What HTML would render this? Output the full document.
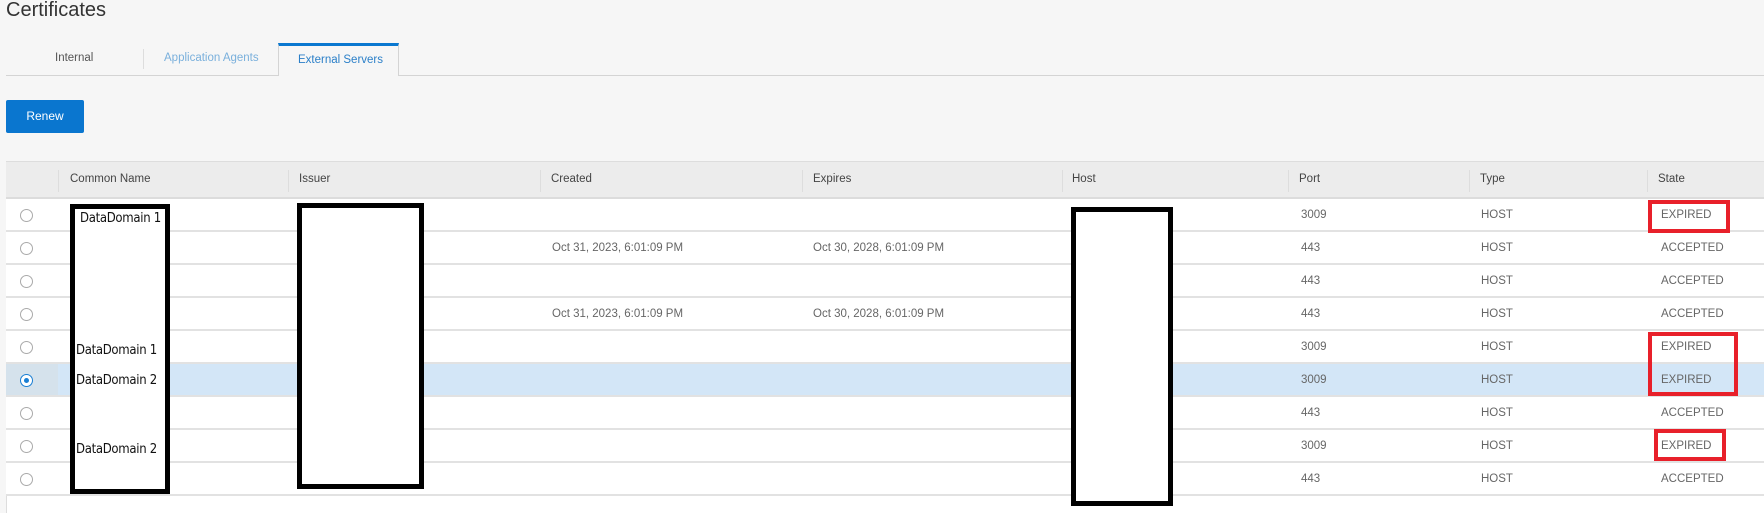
<!DOCTYPE html>
<html><head><style>
*{margin:0;padding:0;box-sizing:border-box}
body{width:1764px;height:513px;background:#f6f6f6;font-family:"Liberation Sans",sans-serif;position:relative;overflow:hidden}
.a{position:absolute}
.t{font-size:11.5px;color:#666;white-space:nowrap}
.h{font-size:11.5px;color:#444}
.row{position:absolute;left:6px;right:0;height:33px;background:#fff;border-bottom:2px solid #e2e2e2}
.rad{position:absolute;left:14px;top:10px;width:13px;height:13px;border:1px solid #aaa;border-radius:50%;background:#fff}
.bb{position:absolute;border:5px solid #000;background:#fff}
.rb{position:absolute;border:4px solid #e8202a}
.dd{position:absolute;font-family:"DejaVu Sans Condensed","Liberation Sans Narrow",sans-serif;font-size:13px;color:#111;letter-spacing:-0.3px}
.sep{position:absolute;top:8px;width:1px;height:22px;background:#ddd}
</style></head><body>
<div class="a" style="left:6px;top:-1px;font-size:20px;color:#333">Certificates</div>
<div class="a" style="left:6px;right:0;top:75px;height:1px;background:#d4d4d4"></div>
<div class="a t" style="left:55px;top:52px;color:#555">Internal</div>
<div class="a" style="left:143px;top:49px;width:1px;height:20px;background:#ddd"></div>
<div class="a t" style="left:164px;top:52px;color:#7ab0dc">Application Agents</div>
<div class="a" style="left:278px;top:43px;width:121px;height:33px;background:#f6f6f6;border:1px solid #d4d4d4;border-bottom:none;border-top:3px solid #0a78d0"></div>
<div class="a t" style="left:298px;top:54px;color:#2a7fc8">External Servers</div>
<div class="a" style="left:6px;top:100px;width:78px;height:33px;background:#0a76cf;border-radius:2px;color:#fff;font-size:12px;text-align:center;line-height:33px">Renew</div>
<div class="a" style="left:6px;right:0;top:161px;height:352px;background:#fff;border-left:1px solid #ddd"></div>
<div class="a" style="left:6px;right:0;top:161px;height:38px;background:#ececec;border-top:1px solid #ddd;border-bottom:2px solid #dcdcdc">
<div class="sep" style="left:52px"></div><div class="sep" style="left:282px"></div><div class="sep" style="left:534px"></div><div class="sep" style="left:796px"></div><div class="sep" style="left:1056px"></div><div class="sep" style="left:1282px"></div><div class="sep" style="left:1463px"></div><div class="sep" style="left:1641px"></div>
<span class="a h" style="left:64px;top:11px">Common Name</span>
<span class="a h" style="left:293px;top:11px">Issuer</span>
<span class="a h" style="left:545px;top:11px">Created</span>
<span class="a h" style="left:807px;top:11px">Expires</span>
<span class="a h" style="left:1066px;top:11px">Host</span>
<span class="a h" style="left:1293px;top:11px">Port</span>
<span class="a h" style="left:1474px;top:11px">Type</span>
<span class="a h" style="left:1652px;top:11px">State</span>
</div>

<div class="row" style="top:199px"><div class="rad"></div><span class="a t" style="left:1295px;top:10px">3009</span><span class="a t" style="left:1475px;top:10px">HOST</span><span class="a t" style="left:1655px;top:10px">EXPIRED</span></div>
<div class="row" style="top:232px"><div class="rad"></div><span class="a t" style="left:546px;top:10px">Oct 31, 2023, 6:01:09 PM</span><span class="a t" style="left:807px;top:10px">Oct 30, 2028, 6:01:09 PM</span><span class="a t" style="left:1295px;top:10px">443</span><span class="a t" style="left:1475px;top:10px">HOST</span><span class="a t" style="left:1655px;top:10px">ACCEPTED</span></div>
<div class="row" style="top:265px"><div class="rad"></div><span class="a t" style="left:1295px;top:10px">443</span><span class="a t" style="left:1475px;top:10px">HOST</span><span class="a t" style="left:1655px;top:10px">ACCEPTED</span></div>
<div class="row" style="top:298px"><div class="rad"></div><span class="a t" style="left:546px;top:10px">Oct 31, 2023, 6:01:09 PM</span><span class="a t" style="left:807px;top:10px">Oct 30, 2028, 6:01:09 PM</span><span class="a t" style="left:1295px;top:10px">443</span><span class="a t" style="left:1475px;top:10px">HOST</span><span class="a t" style="left:1655px;top:10px">ACCEPTED</span></div>
<div class="row" style="top:331px"><div class="rad"></div><span class="a t" style="left:1295px;top:10px">3009</span><span class="a t" style="left:1475px;top:10px">HOST</span><span class="a t" style="left:1655px;top:10px">EXPIRED</span></div>
<div class="row" style="top:364px;background:#d3e6f7"><div class="a" style="left:0;top:0;width:52px;height:31px;background:#d5e2ec"></div><div class="rad" style="border-color:#1a7fd4"><div class="a" style="left:3px;top:3px;width:5px;height:5px;border-radius:50%;background:#1a7fd4"></div></div><span class="a t" style="left:1295px;top:10px">3009</span><span class="a t" style="left:1475px;top:10px">HOST</span><span class="a t" style="left:1655px;top:10px">EXPIRED</span></div>
<div class="row" style="top:397px"><div class="rad"></div><span class="a t" style="left:1295px;top:10px">443</span><span class="a t" style="left:1475px;top:10px">HOST</span><span class="a t" style="left:1655px;top:10px">ACCEPTED</span></div>
<div class="row" style="top:430px"><div class="rad"></div><span class="a t" style="left:1295px;top:10px">3009</span><span class="a t" style="left:1475px;top:10px">HOST</span><span class="a t" style="left:1655px;top:10px">EXPIRED</span></div>
<div class="row" style="top:463px"><div class="rad"></div><span class="a t" style="left:1295px;top:10px">443</span><span class="a t" style="left:1475px;top:10px">HOST</span><span class="a t" style="left:1655px;top:10px">ACCEPTED</span></div>

<div class="bb" style="left:70px;top:204px;width:100px;height:290px"></div>
<div class="bb" style="left:297px;top:203px;width:127px;height:286px"></div>
<div class="bb" style="left:1071px;top:207px;width:102px;height:299px"></div>
<div class="dd" style="left:80px;top:211px">DataDomain 1</div>
<div class="dd" style="left:76px;top:343px">DataDomain 1</div>
<div class="dd" style="left:76px;top:373px">DataDomain 2</div>
<div class="dd" style="left:76px;top:442px">DataDomain 2</div>

<div class="rb" style="left:1648px;top:200px;width:82px;height:33px"></div>
<div class="rb" style="left:1648px;top:332px;width:90px;height:64px"></div>
<div class="rb" style="left:1654px;top:429px;width:72px;height:32px"></div>
</body></html>
